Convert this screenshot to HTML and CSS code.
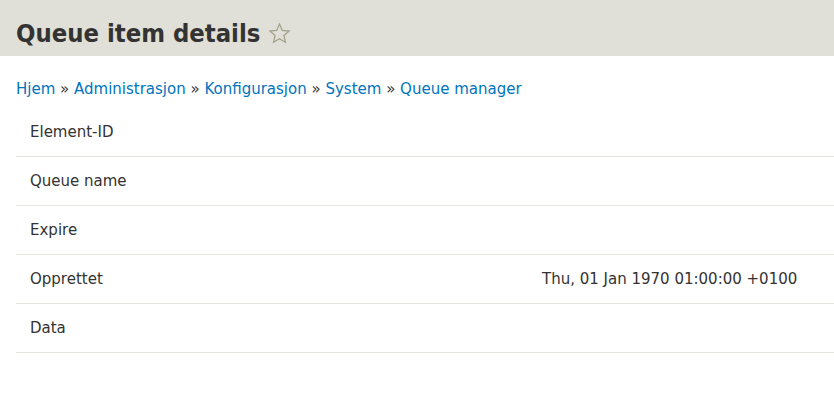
FILE: index.html
```html
<!DOCTYPE html>
<html lang="nb">
<head>
  <meta charset="UTF-8" />
  <meta name="viewport" content="width=device-width, initial-scale=1.0"/>
  <title>Queue item details</title>
  <link rel="stylesheet" href="styles.css">
</head>
<body>
  <div class="page-header">
    <h1>Queue item details
      <svg class="star" viewBox="0 0 24 24" width="23" height="23" aria-hidden="true">
        <path d="M12 2.2l2.9 6.6 7.1.6-5.4 4.7 1.6 7-6.2-3.7-6.2 3.7 1.6-7L2 9.4l7.1-.6z" fill="none" stroke="#a3a08a" stroke-width="1.3" stroke-linejoin="miter"/>
      </svg>
    </h1>
  </div>

  <div class="content">
    <nav class="breadcrumb">
      <a href="#">Hjem</a> » <a href="#">Administrasjon</a> » <a href="#">Konfigurasjon</a> » <a href="#">System</a> » <a href="#">Queue manager</a>
    </nav>

    <table class="details">
      <tr><td class="label">Element-ID</td><td></td></tr>
      <tr><td class="label">Queue name</td><td></td></tr>
      <tr><td class="label">Expire</td><td></td></tr>
      <tr><td class="label">Opprettet</td><td>Thu, 01 Jan 1970 01:00:00 +0100</td></tr>
      <tr><td class="label">Data</td><td></td></tr>
    </table>
  </div>
</body>
</html>
```

FILE: styles.css
```css
body {
  margin: 0;
  font-family: 'DejaVu Sans', sans-serif;
  color: #333;
  background: #fff;
}
.page-header {
  background: #e0e0d8;
  height: 56px;
  padding: 18px 16px 0;
  box-sizing: border-box;
}
h1 {
  margin: 0;
  font-family: 'DejaVu Sans Condensed', 'DejaVu Sans', sans-serif;
  font-size: 25.4px;
  line-height: 30px;
  font-weight: bold;
  color: #333;
  display: flex;
  align-items: center;
  gap: 8px;
}
.star {
  display: block;
}
.content {
  padding: 23px 0 0 16px;
}
.breadcrumb {
  font-size: 15px;
  line-height: 20px;
}
.breadcrumb a {
  color: #0074bd;
  text-decoration: none;
}
.details {
  width: 100%;
  border-collapse: collapse;
  table-layout: fixed;
  margin-top: 9px;
  font-size: 15px;
}
.details td {
  padding: 15px 14px 14px 14px;
  border-bottom: 1px solid #e6e4df;
  height: 19px;
  line-height: 19px;
}
.details td.label {
  width: 484px;
}
```
